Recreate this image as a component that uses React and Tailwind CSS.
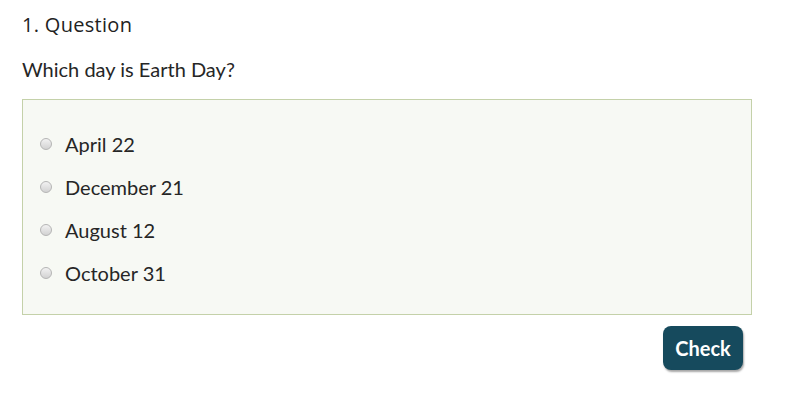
import React, { useState } from "react";

const options = ["April 22", "December 21", "August 12", "October 31"];

const App = () => {
  const [picked, setPicked] = useState(null);

  return (
    <div className="min-h-screen bg-white pl-[22px] pt-[11px] font-['Lato',sans-serif] text-[#222]">
      <h3 className="text-[20px] leading-[28px] font-['Open_Sans',sans-serif] font-medium tracking-[0.3px] text-[#222]">
        1. Question
      </h3>

      <p className="mt-[18px] text-[20px] leading-[24px] text-[#262626]">
        Which day is Earth Day?
      </p>

      <div className="mt-[18px] w-[730px] h-[216px] border border-[#c4d1a9] bg-[#f7f9f4] pt-[22px] pl-[17px]">
        {options.map((opt) => (
          <label
            key={opt}
            className="flex items-center h-[43px] cursor-pointer"
            onClick={() => setPicked(opt)}
          >
            {/* radio dot */}
            <span className="w-[12px] h-[12px] rounded-full border border-[#b5b5b5] bg-gradient-to-b from-[#f2f2f2] to-[#d2d2d2] flex items-center justify-center">
              {picked === opt && (
                <span className="w-[6px] h-[6px] rounded-full bg-[#444]" />
              )}
            </span>
            <span className="ml-[13px] text-[20px] leading-[24px] text-[#262626]">
              {opt}
            </span>
          </label>
        ))}
      </div>

      <div className="w-[730px] flex justify-end pr-[9px] mt-[11px]">
        <button className="w-[80px] h-[44px] rounded-[8px] bg-[#164a5d] text-white text-[20px] font-bold shadow-[1px_2px_2px_rgba(0,0,0,0.35)]">
          Check
        </button>
      </div>
    </div>
  );
};

export default App;
